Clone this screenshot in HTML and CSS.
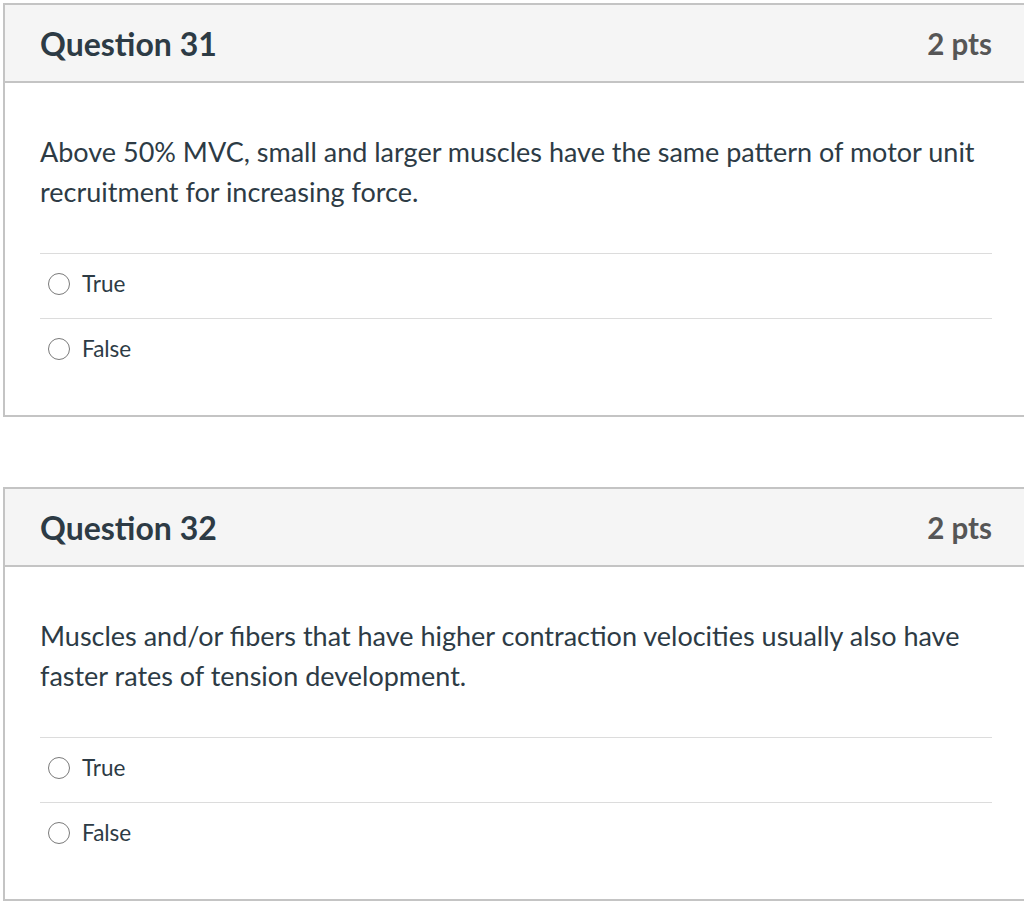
FILE: index.html
```html
<!DOCTYPE html>
<html lang="en">
<head>
<meta charset="utf-8">
<title>Quiz</title>
<link rel="stylesheet" href="styles.css">
</head>
<body>
<div class="page">
  <section class="question">
    <header class="q-header">
      <h2 class="q-title">Question 31</h2>
      <span class="q-points">2 pts</span>
    </header>
    <div class="q-body">
      <p class="q-text">Above 50% MVC, small and larger muscles have the same pattern of motor unit recruitment for increasing force.</p>
      <div class="answers">
        <label class="answer"><span class="radio"></span><span class="answer-label">True</span></label>
        <label class="answer"><span class="radio"></span><span class="answer-label">False</span></label>
      </div>
    </div>
  </section>
  <section class="question">
    <header class="q-header">
      <h2 class="q-title">Question 32</h2>
      <span class="q-points">2 pts</span>
    </header>
    <div class="q-body">
      <p class="q-text">Muscles and/or fibers that have higher contraction velocities usually also have faster rates of tension development.</p>
      <div class="answers">
        <label class="answer"><span class="radio"></span><span class="answer-label">True</span></label>
        <label class="answer"><span class="radio"></span><span class="answer-label">False</span></label>
      </div>
    </div>
  </section>
</div>
</body>
</html>
```
FILE: styles.css
```css
html, body {
  margin: 0;
  padding: 0;
  background: #ffffff;
  overflow: hidden;
}
body {
  font-family: Lato, "Open Sans", "Liberation Sans", sans-serif;
  color: #2d3b45;
}
.page {
  padding-top: 3px;
  padding-left: 3px;
  width: 1040px;
}
.question {
  width: 1025px;
  border: 2px solid #c4c4c4;
  margin-bottom: 70px;
  box-sizing: border-box;
}
.q-header {
  display: flex;
  justify-content: space-between;
  align-items: center;
  height: 76px;
  padding: 0 34px 0 35px;
  background: #f5f5f5;
  border-bottom: 2px solid #c4c4c4;
}
.q-title {
  margin: 0;
  font-size: 32px;
  font-weight: 700;
  color: #2d3b45;
}
.q-points {
  font-size: 29.5px;
  font-weight: 700;
  color: #565656;
}
.q-body {
  padding: 49px 34px 32px 35px;
}
.q-text {
  margin: 0 0 41px 0;
  font-size: 27px;
  line-height: 40px;
}
.answers {
  display: flex;
  flex-direction: column;
}
.answer {
  display: flex;
  align-items: center;
  box-sizing: border-box;
  height: 65px;
  padding-bottom: 4px;
  border-top: 1px solid #dcdcdc;
  padding-left: 8px;
}
.radio {
  width: 20px;
  height: 20px;
  border: 1.8px solid #7a7a7a;
  border-radius: 50%;
  margin-right: 12px;
  flex: none;
}
.answer-label {
  font-size: 22.5px;
  line-height: 30px;
}
```
